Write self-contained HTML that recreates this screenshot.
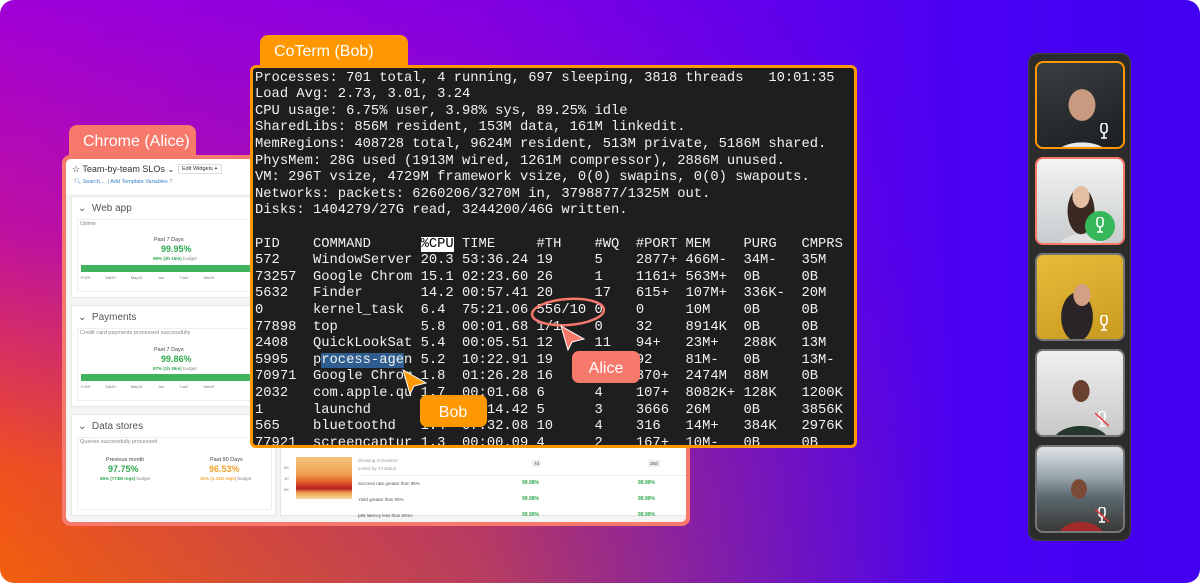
<!DOCTYPE html>
<html><head><meta charset="utf-8"><style>
*{margin:0;padding:0;box-sizing:border-box}
html,body{width:1200px;height:583px;background:#fff;overflow:hidden}
#bg{position:absolute;left:0;top:0;width:1200px;height:583px;border-radius:14px;overflow:hidden;
background:linear-gradient(90deg,rgba(75,0,245,0) 0%,rgba(75,0,245,0.35) 40%,#4a00f2 80%,#4300f0 100%),linear-gradient(180deg,#a000d8 0%,#c010a0 40%,#f05020 80%,#f25f0c 100%);}
.tab{position:absolute;color:#fff;font-family:"Liberation Sans",sans-serif;font-size:16px;padding-left:14px;line-height:33px;border-radius:8px 8px 0 0}
#chrome{position:absolute;left:62px;top:155px;width:628px;height:371px;background:#f7796b;border-radius:8px;padding:4px}
#cin{position:relative;width:100%;height:100%;background:#f4f4f4;border-radius:5px;overflow:hidden;font-family:"Liberation Sans",sans-serif;color:#444}
.card{position:absolute;background:#fff;border:1px solid #e6e6e6}
.small{font-size:5px;color:#888}
.g{color:#2fa84f;font-weight:bold}
#term{position:absolute;left:250px;top:65px;width:607px;height:383px;background:#1e1e1e;border:3px solid #ff9800;border-radius:6px;overflow:hidden}
pre{font-family:"Liberation Mono",monospace;font-size:13.8px;line-height:16.6px;color:#f2f2f2;position:absolute;left:2px;top:2.7px}
.hl{background:#fff;color:#000}
.sel{background:#2f5d8f}
#side{position:absolute;left:1028px;top:53px;width:103px;height:488px;background:#2c2c2c;border-radius:10px;border:1px solid #444}
.tile{position:absolute;left:6px;width:90px;height:88px;border-radius:8px;border:2px solid #777;overflow:hidden}
.mic{position:absolute;right:14px;bottom:8px}
</style></head><body>
<div id="bg">
<div class="tab" style="left:69px;top:125px;width:127px;background:#f7796b">Chrome (Alice)</div>
<div id="chrome"><div id="cin">
 <div style="position:absolute;left:0;top:0;width:620px;height:35px;background:#fff"></div>
 <div style="position:absolute;left:6px;top:5px;font-size:9px;color:#333">☆ Team-by-team SLOs <span style="font-size:8px">⌄</span></div>
 <div style="position:absolute;left:112px;top:5px;font-size:5.5px;border:1px solid #ddd;padding:1px 3px;color:#333">Edit Widgets <b>+</b></div>
 <div style="position:absolute;left:8px;top:20px;font-size:5.5px;color:#3b7fc4">🔍︎ Search... &nbsp;| Add Template Variables <span style="color:#888">?</span></div>
 <div class="card" style="left:5px;top:37px;width:600px;height:102px"></div>
 <div style="position:absolute;left:12px;top:44px;font-size:10px;color:#555">⌄ &nbsp;Web app</div>
 <div class="card" style="left:11px;top:60px;width:590px;height:73px;border-color:#eee"></div>
 <div style="position:absolute;left:14px;top:62px" class="small">Uptime</div>
 <div style="position:absolute;left:88px;top:78px;font-size:5.5px;color:#444">Past 7 Days</div>
 <div style="position:absolute;left:95px;top:85px;font-size:9px" class="g">99.95%</div>
 <div style="position:absolute;left:87px;top:97px;font-size:4.5px;color:#888"><span class="g">98% (3h 16m)</span> budget</div>
 <div style="position:absolute;left:15px;top:106px;width:590px;height:7px;background:#42b35d"></div>
 <div style="position:absolute;left:15px;top:116px;font-size:4px;color:#777;word-spacing:14px">Fri29 Sat30 May31 Jun Tue2 Wed3</div>
 <div class="card" style="left:5px;top:146px;width:600px;height:102px"></div>
 <div style="position:absolute;left:12px;top:153px;font-size:10px;color:#555">⌄ &nbsp;Payments</div>
 <div class="card" style="left:11px;top:169px;width:590px;height:73px;border-color:#eee"></div>
 <div style="position:absolute;left:14px;top:171px;font-size:5.5px;color:#888">Credit card payments processed successfully</div>
 <div style="position:absolute;left:88px;top:188px;font-size:5.5px;color:#444">Past 7 Days</div>
 <div style="position:absolute;left:95px;top:195px;font-size:9px" class="g">99.86%</div>
 <div style="position:absolute;left:87px;top:207px;font-size:4.5px;color:#888"><span class="g">87% (1h 36m)</span> budget</div>
 <div style="position:absolute;left:15px;top:215px;width:590px;height:7px;background:#42b35d"></div>
 <div style="position:absolute;left:15px;top:225px;font-size:4px;color:#777;word-spacing:14px">Fri29 Sat30 May31 Jun Tue2 Wed3</div>
 <div class="card" style="left:5px;top:255px;width:205px;height:102px"></div>
 <div style="position:absolute;left:12px;top:262px;font-size:10px;color:#555">⌄ &nbsp;Data stores</div>
 <div class="card" style="left:11px;top:278px;width:195px;height:73px;border-color:#eee"></div>
 <div style="position:absolute;left:14px;top:280px;font-size:5.5px;color:#888">Queries successfully processed</div>
 <div style="position:absolute;left:40px;top:298px;font-size:5.5px;color:#444">Previous month</div>
 <div style="position:absolute;left:42px;top:305px;font-size:9px" class="g">97.75%</div>
 <div style="position:absolute;left:34px;top:317px;font-size:4.5px;color:#888"><span class="g">55% (774M reqs)</span> budget</div>
 <div style="position:absolute;left:144px;top:298px;font-size:5.5px;color:#444">Past 90 Days</div>
 <div style="position:absolute;left:143px;top:305px;font-size:9px;color:#f0a030;font-weight:bold">96.53%</div>
 <div style="position:absolute;left:134px;top:317px;font-size:4.5px;color:#888"><span style="color:#f0a030;font-weight:bold">31% (1.21G reqs)</span> budget</div>
 <div class="card" style="left:214px;top:255px;width:410px;height:102px"></div>
 <div style="position:absolute;left:230px;top:298px;width:56px;height:42px;background:linear-gradient(180deg,#f3c27a 0%,#f0a050 40%,#e05a2a 60%,#b81e20 75%,#f0a050 85%,#f7d9a0 100%)"></div>
 <div style="position:absolute;left:218px;top:303px;font-size:4px;color:#777;line-height:11px">2K<br>1K<br>0K</div>
 <div style="position:absolute;left:290px;top:295px;width:330px;height:60px;background:#fff"></div>
 <div style="position:absolute;left:292px;top:298px;font-size:4.5px;color:#999;line-height:8px">Showing 3 monitors<br>sorted by 7d status</div>
 <div style="position:absolute;left:466px;top:301px;font-size:4.5px;background:#eee;padding:1px 2px">7d</div>
 <div style="position:absolute;left:582px;top:301px;font-size:4.5px;background:#eee;padding:1px 2px">30d</div>
 <div style="position:absolute;left:292px;top:316px;width:330px;font-size:4.5px;color:#555;line-height:16px;border-top:1px solid #eee">Success rate greater than 95%<br>Yield greater than 95%<br>p95 latency less than 50ms</div>
 <div style="position:absolute;left:456px;top:316px;font-size:5px;line-height:16px" class="g">99.98%<br>99.98%<br>99.99%</div>
 <div style="position:absolute;left:572px;top:316px;font-size:5px;line-height:16px" class="g">99.99%<br>99.99%<br>99.99%</div>
</div></div>

<div class="tab" style="left:260px;top:35px;width:148px;background:#ff9800">CoTerm (Bob)</div>
<div id="term"><pre>Processes: 701 total, 4 running, 697 sleeping, 3818 threads   10:01:35
Load Avg: 2.73, 3.01, 3.24
CPU usage: 6.75% user, 3.98% sys, 89.25% idle
SharedLibs: 856M resident, 153M data, 161M linkedit.
MemRegions: 408728 total, 9624M resident, 513M private, 5186M shared.
PhysMem: 28G used (1913M wired, 1261M compressor), 2886M unused.
VM: 296T vsize, 4729M framework vsize, 0(0) swapins, 0(0) swapouts.
Networks: packets: 6260206/3270M in, 3798877/1325M out.
Disks: 1404279/27G read, 3244200/46G written.

PID    COMMAND      <span class="hl">%CPU</span> TIME     #TH    #WQ  #PORT MEM    PURG   CMPRS
572    WindowServer 20.3 53:36.24 19     5    2877+ 466M-  34M-   35M
73257  Google Chrom 15.1 02:23.60 26     1    1161+ 563M+  0B     0B
5632   Finder       14.2 00:57.41 20     17   615+  107M+  336K-  20M
0      kernel_task  6.4  75:21.06 556/10 0    0     10M    0B     0B
77898  top          5.8  00:01.68 1/1    0    32    8914K  0B     0B
2408   QuickLookSat 5.4  00:05.51 12     11   94+   23M+   288K   13M
5995   p<span class="sel">rocess-age</span>n 5.2  10:22.91 19     3    92    81M-   0B     13M-
70971  Google Chrom 1.8  01:26.28 16     1    370+  2474M  88M    0B
2032   com.apple.qu 1.7  00:01.68 6      4    107+  8082K+ 128K   1200K
1      launchd      1.5  14:14.42 5      3    3666  26M    0B     3856K
565    bluetoothd   1.4  07:32.08 10     4    316   14M+   384K   2976K
77921  screencaptur 1.3  00:00.09 4      2    167+  10M-   0B     0B</pre></div>

<svg style="position:absolute;left:0;top:0" width="1200" height="583">
 <ellipse cx="568" cy="312" rx="36" ry="13" fill="none" stroke="#f7796b" stroke-width="2.5" transform="rotate(-4 568 312)"/>
 <path d="M561 326 L568 350 L572 342 L584 339 Z" fill="#f7796b" stroke="#fff" stroke-width="1"/>
 <rect x="572" y="351" width="68" height="32" rx="7" fill="#f7796b"/>
 <text x="606" y="373" text-anchor="middle" fill="#fff" font-family="Liberation Sans" font-size="16">Alice</text>
 <path d="M403 370 L410 394 L414 386 L426 383 Z" fill="#ff9800" stroke="#fff" stroke-width="1"/>
 <rect x="420" y="395" width="67" height="32" rx="7" fill="#ff9800"/>
 <text x="453" y="417" text-anchor="middle" fill="#fff" font-family="Liberation Sans" font-size="16">Bob</text>
</svg>

<div id="side">
 <div class="tile" style="top:7px;border-color:#ff9800;background:radial-gradient(ellipse 22px 26px at 45px 42px,#c99a80 60%,transparent 62%),radial-gradient(ellipse 40px 22px at 45px 95px,#e8e8e8 70%,transparent 72%),linear-gradient(160deg,#3a3f42,#1c1e20)">
  <svg class="mic" width="10" height="16" viewBox="0 0 10 16"><rect x="2" y="0" width="6" height="10" rx="3" fill="none" stroke="#fff" stroke-width="1.6"/><path d="M5 10v5M2 15h6" stroke="#fff" stroke-width="1.6"/></svg></div>
 <div class="tile" style="top:103px;border-color:#f7796b;background:radial-gradient(ellipse 14px 18px at 44px 38px,#e4bfa3 60%,transparent 62%),radial-gradient(ellipse 22px 38px at 44px 52px,#3a2a22 60%,transparent 62%),radial-gradient(ellipse 34px 24px at 44px 92px,#e0e0e0 70%,transparent 72%),linear-gradient(180deg,#f3f3f3,#c8ccce)">
  <div style="position:absolute;left:48px;top:52px;width:30px;height:30px;border-radius:50%;background:#36b85a"></div>
  <svg style="position:absolute;left:58px;top:58px" width="10" height="16" viewBox="0 0 10 16"><rect x="2" y="0" width="6" height="10" rx="3" fill="none" stroke="#fff" stroke-width="1.6"/><path d="M5 10v5M2 15h6" stroke="#fff" stroke-width="1.6"/></svg></div>
 <div class="tile" style="top:199px;background:radial-gradient(ellipse 14px 18px at 45px 40px,#d2a084 60%,transparent 62%),radial-gradient(ellipse 26px 40px at 40px 62px,#2a2426 60%,transparent 62%),linear-gradient(160deg,#e8bc3a,#c89a20)">
  <svg class="mic" width="10" height="16" viewBox="0 0 10 16"><rect x="2" y="0" width="6" height="10" rx="3" fill="none" stroke="#fff" stroke-width="1.6"/><path d="M5 10v5M2 15h6" stroke="#fff" stroke-width="1.6"/></svg></div>
 <div class="tile" style="top:295px;background:radial-gradient(ellipse 14px 18px at 44px 40px,#6a4030 60%,transparent 62%),radial-gradient(ellipse 40px 24px at 44px 92px,#24382c 70%,transparent 72%),linear-gradient(180deg,#f0f0f0,#c8c8c8)">
  <svg class="mic" width="14" height="16" viewBox="0 0 14 16"><rect x="4" y="0" width="6" height="10" rx="3" fill="none" stroke="#fff" stroke-width="1.6"/><path d="M7 10v5M4 15h6" stroke="#fff" stroke-width="1.6"/><path d="M0 2L14 15" stroke="#e33" stroke-width="1.4"/></svg></div>
 <div class="tile" style="top:391px;background:radial-gradient(ellipse 13px 16px at 42px 42px,#7a4a34 60%,transparent 62%),radial-gradient(ellipse 34px 24px at 44px 92px,#a22a28 70%,transparent 72%),linear-gradient(180deg,#dfe3e6 0%,#9aa6ae 35%,#5b6870 60%,#3a3a34 100%)">
  <svg class="mic" width="14" height="16" viewBox="0 0 14 16"><rect x="4" y="0" width="6" height="10" rx="3" fill="none" stroke="#fff" stroke-width="1.6"/><path d="M7 10v5M4 15h6" stroke="#fff" stroke-width="1.6"/><path d="M0 2L14 15" stroke="#e33" stroke-width="1.4"/></svg></div>
</div>
</div>
</body></html>
